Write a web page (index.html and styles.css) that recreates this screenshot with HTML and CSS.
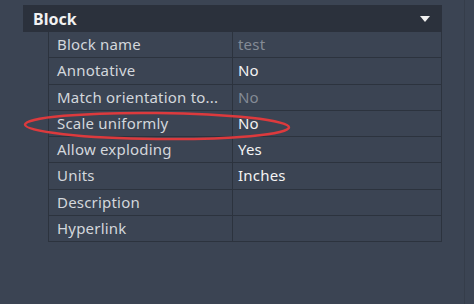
FILE: index.html
```html
<!DOCTYPE html>
<html lang="en">
<head>
    <meta charset="UTF-8">
    <title>Block properties</title>
    <link rel="stylesheet" href="styles.css">
</head>
<body>
    <div class="panel">
        <div class="seccion">
            <span class="titulo">Block</span>
            <span class="flecha"></span>
        </div>
        <div class="propiedades">
            <div class="fila"><div class="nombre">Block name</div><div class="valor gris">test</div></div>
            <div class="fila"><div class="nombre">Annotative</div><div class="valor">No</div></div>
            <div class="fila"><div class="nombre">Match orientation to...</div><div class="valor gris">No</div></div>
            <div class="fila"><div class="nombre">Scale uniformly</div><div class="valor">No</div></div>
            <div class="fila"><div class="nombre">Allow exploding</div><div class="valor">Yes</div></div>
            <div class="fila"><div class="nombre">Units</div><div class="valor">Inches</div></div>
            <div class="fila"><div class="nombre">Description</div><div class="valor"></div></div>
            <div class="fila"><div class="nombre">Hyperlink</div><div class="valor"></div></div>
        </div>
        <svg class="marca" width="474" height="304" viewBox="0 0 474 304">
            <ellipse cx="157" cy="126" rx="132" ry="13" transform="rotate(0.6 157 126)" fill="none" stroke="#dc3a3d" stroke-width="2.5"/>
        </svg>
    </div>
</body>
</html>
```

FILE: styles.css
```css
body {
    margin: 0;
    padding: 0;
    background-color: #3b4453;
    font-family: "Noto Sans", "Open Sans", sans-serif;
    width: 474px;
    height: 304px;
    overflow: hidden;
}
.panel {
    position: relative;
    height: 304px;
    padding: 5px 22px 0 23px;
    box-sizing: border-box;
    border-right: 1px solid #353d4a;
    width: 465px;
}
.seccion {
    height: 27px;
    background-color: #2b313c;
    display: flex;
    justify-content: space-between;
    align-items: center;
    padding: 0 12px 0 10px;
}
.titulo {
    color: #f2f2f2;
    font-weight: bold;
    font-size: 16px;
}
.flecha {
    width: 0;
    height: 0;
    border-left: 5px solid transparent;
    border-right: 5px solid transparent;
    border-top: 6px solid #f0f0f0;
}
.propiedades {
    margin-left: 25px;
    border-left: 1px solid #2c333e;
    border-right: 1px solid #2c333e;
}
.fila {
    display: flex;
    height: 26.25px;
    box-sizing: border-box;
    border-bottom: 1px solid #2c333e;
    font-size: 15px;
    letter-spacing: 0.2px;
    line-height: 25px;
}
.nombre {
    width: 184px;
    padding-left: 8px;
    color: #d3d7dc;
    border-right: 1px solid #2c333e;
    box-sizing: border-box;
    white-space: nowrap;
    overflow: hidden;
}
.valor {
    flex: 1;
    padding-left: 5px;
    color: #f3f3f3;
}
.valor.gris {
    color: #848b96;
}
.marca {
    position: absolute;
    left: 0;
    top: 0;
    pointer-events: none;
}
```
